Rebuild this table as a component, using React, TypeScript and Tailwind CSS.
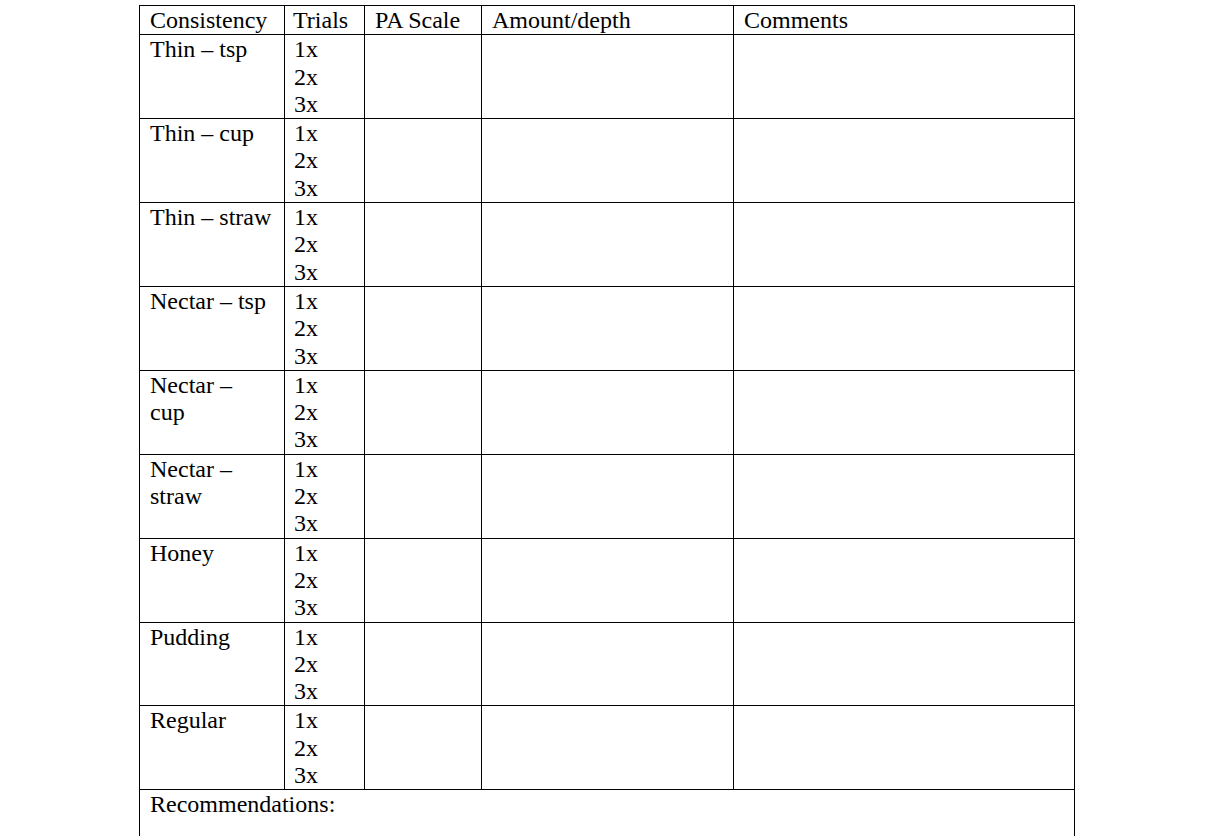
import React from "react";

const rows: React.ReactNode[] = [
  "Thin – tsp",
  "Thin – cup",
  "Thin – straw",
  "Nectar – tsp",
  <>Nectar –<br />cup</>,
  <>Nectar –<br />straw</>,
  "Honey",
  "Pudding",
  "Regular",
];

const th = "border border-black px-[10px] pt-[1px] pb-0 text-left font-normal align-top whitespace-nowrap";
const td = "border border-black px-[10px] pt-[1px] pb-0 align-top whitespace-nowrap";

export default function App() {
  return (
    <div
      className="min-h-[836px] w-full bg-white pt-[5px] text-black"
      style={{ fontFamily: '"Liberation Serif", "Times New Roman", serif' }}
    >
      <table className="ml-[139px] table-fixed border-collapse text-[24px] leading-[27.3px]">
        <colgroup>
          <col className="w-[145px]" />
          <col className="w-[80px]" />
          <col className="w-[117px]" />
          <col className="w-[252px]" />
          <col className="w-[341px]" />
        </colgroup>
        <thead>
          <tr>
            <th className={th}>Consistency</th>
            <th className="border border-black px-[8px] pt-[1px] pb-0 text-left font-normal align-top">Trials</th>
            <th className={th}>PA Scale</th>
            <th className={th}>Amount/depth</th>
            <th className={th}>Comments</th>
          </tr>
        </thead>
        <tbody>
          {rows.map((r, i) => (
            <tr key={i}>
              <td className={td}>{r}</td>
              <td className="border border-black px-[9px] pt-[1px] pb-0 align-top">
                1x
                <br />
                2x
                <br />
                3x
              </td>
              <td className="border border-black"></td>
              <td className="border border-black"></td>
              <td className="border border-black"></td>
            </tr>
          ))}
          <tr>
            <td colSpan={5} className="h-[80px] border border-black px-[10px] pt-[1px] pb-0 align-top">
              Recommendations:
            </td>
          </tr>
        </tbody>
      </table>
    </div>
  );
}
